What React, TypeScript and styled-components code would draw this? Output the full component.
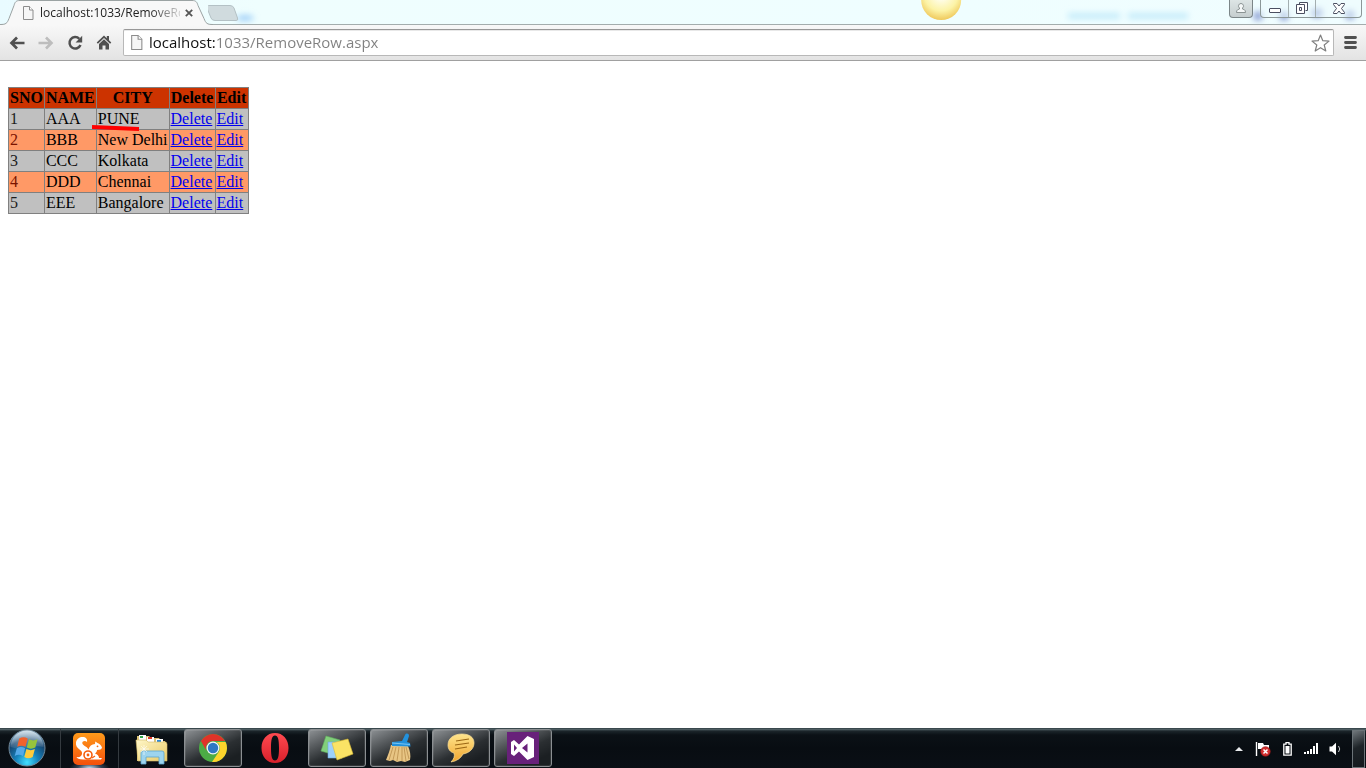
import React from "react";
import styled, { createGlobalStyle, css } from "styled-components";

const GlobalStyle = createGlobalStyle`
  * { box-sizing: border-box; }
  body { margin: 0; background: #fff; }
  button { padding: 0; border: 0; background: none; font: inherit; }
  svg { display: block; flex: none; }
`;

const uiFont = `"Open Sans", "Noto Sans", sans-serif`;

const Screen = styled.div`
  display: flex;
  flex-direction: column;
  min-height: 100vh;
`;

const TitleBar = styled.header`
  position: relative;
  display: flex;
  height: 25px;
  padding: 0 4px;
  background: linear-gradient(90deg, #e9fbff 0, #effefe 260px, #effeff 70%, #f0fdff);
  border-bottom: 1px solid #a3adad;
`;

const Glow = styled.svg`
  position: absolute;
  left: 0;
  top: 0;
  width: 100%;
  height: 24px;
`;

const Tab = styled.div`
  position: relative;
  z-index: 1;
  display: flex;
  align-items: center;
  width: 204px;
  height: 25px;
  padding: 1px 15px 0 18px;
  font-family: ${uiFont};
  font-size: 12px;
  color: #222;
`;

const TabShape = styled.svg`
  position: absolute;
  left: -4px;
  top: 0;
`;

const TabTitle = styled.span`
  position: relative;
  flex: 1;
  min-width: 0;
  margin: 0 4px 0 6px;
  white-space: nowrap;
  line-height: 20px;
  mask-image: linear-gradient(90deg, #000 110px, #0003 138px);
`;

const IconButton = styled.button<{ $w?: number }>`
  position: relative;
  display: flex;
  align-items: center;
  justify-content: center;
  width: ${(p) => p.$w ?? 29}px;
  height: 100%;
`;

const NewTab = styled.button`
  position: relative;
  width: 34px;
  height: 22px;
`;

const WindowControls = styled.div`
  position: relative;
  display: flex;
  align-items: flex-start;
  gap: 7px;
  margin-left: auto;
`;

const UserButton = styled.button`
  display: flex;
  align-items: center;
  justify-content: center;
  width: 24px;
  height: 18px;
  border: 1px solid #7c8688;
  border-top: 0;
  border-radius: 0 0 4px 4px;
  background: linear-gradient(#dde5e5, #c6cecf);
`;

const ControlGroup = styled.div`
  display: flex;
  height: 18px;
  border: 1px solid #8b9798;
  border-top: 0;
  border-radius: 0 0 4px 4px;
  background: #eefbfd80;
`;

const Control = styled.button<{ $wide?: boolean }>`
  display: flex;
  align-items: center;
  justify-content: center;
  width: ${(p) => (p.$wide ? 46 : 27)}px;
  height: 16px;
  & + & { height: 17px; padding-bottom: 1px; border-left: 1px solid #a3aeb0; }
`;

const Toolbar = styled.nav`
  display: flex;
  align-items: center;
  height: 36px;
  padding: 0 1px 0 2px;
  background: linear-gradient(#f8f8f8, #e3e3e3);
  border-bottom: 1px solid #a0a0a0;
`;

const Omnibox = styled.form`
  display: flex;
  align-items: center;
  flex: 1;
  height: 27px;
  margin: 0 2px 0 5px;
  padding-left: 6px;
  border: 1px solid #b8b8b8;
  border-top-color: #989898;
  border-radius: 2px;
  background: #fff;
  box-shadow: inset 0 1px #e8e8e8;
`;

const Address = styled.input`
  flex: 1;
  min-width: 0;
  height: 24px;
  margin-left: 6px;
  padding: 0 0 2px;
  border: 0;
  outline: 0;
  font-family: ${uiFont};
  font-size: 15px;
  color: #808080;
  background: linear-gradient(90deg, #111 67px, #808080 67px);
  background-clip: text;
  -webkit-text-fill-color: transparent;
`;

const Page = styled.main`
  flex: 1;
  padding: 26px 8px 8px;
  font-family: "Liberation Serif", serif;
  font-size: 16px;
  line-height: 18px;
  color: #000;
`;

const Grid = styled.table`
  border-collapse: collapse;
  th, td {
    position: relative;
    padding: 1px;
    border: 1px solid #808080;
    white-space: nowrap;
  }
  td { text-align: left; }
`;

const ActionColumn = styled.col<{ $w: number }>`
  width: ${(p) => p.$w}px;
`;

const HeadRow = styled.tr`
  background: #cc3300;
`;

const Row = styled.tr<{ $alt: boolean }>`
  background: ${(p) => (p.$alt ? "#ff9966" : "#c0c0c0")};
`;

const Serial = styled.td<{ $alt: boolean }>`
  color: ${(p) => (p.$alt ? "#7a1400" : "#1c1c1c")};
`;

const Link = styled.a`
  color: #0000ee;
  text-decoration: underline;
`;

const Underline = styled.svg`
  position: absolute;
  left: -5px;
  top: 14px;
`;

const TaskBar = styled.footer`
  display: flex;
  align-items: stretch;
  height: 40px;
  padding-right: 1px;
  border-top: 1px solid #39484d;
  background: linear-gradient(#5c6d72 0, #1c262b 2px, #0b1116 6px, #080d12 50%, #0a0f15);
`;

const TaskButton = styled.button<{ $w?: number; $framed?: boolean }>`
  display: flex;
  align-items: center;
  justify-content: center;
  width: ${(p) => p.$w ?? 58}px;
  height: 38px;
  margin-right: ${(p) => (p.$w ? 0 : 4)}px;
  ${(p) =>
    p.$framed &&
    css`
      border: 1px solid #8b8f92;
      border-radius: 3px;
      background: linear-gradient(155deg, #8d9194 0, #5a5e61 28%, #2b2f32 55%, #1b1f22 80%);
      box-shadow: inset 0 0 0 1px #ffffff18;
    `}
`;

const StartButton = styled(TaskButton)`
  padding-right: 6px;
`;

const Launcher = styled(TaskButton)`
  height: 39px;
  border-left: 1px solid #343a3f;
`;

const ActiveLauncher = styled(Launcher)`
  padding-right: 2px;
  background: radial-gradient(ellipse 20px 7px at 50% 100%, #c3dcf4, #53718f80 60%, transparent);
`;

const Tray = styled.div`
  display: flex;
  align-items: center;
  margin-left: auto;
`;

const TrayButton = styled.button`
  display: flex;
  align-items: center;
  justify-content: center;
  width: 24px;
  height: 38px;
`;

const ShowDesktop = styled.button`
  width: 13px;
  height: 38px;
  margin-left: 5px;
  border: 1px solid #6c7478;
  background: linear-gradient(155deg, #70777b, #1e2428 45%, #14191d);
`;

const PageGlyph = styled.svg`
  position: relative;
`;

const PageIcon = ({ h = 14 }: { h?: number }) => (
  <PageGlyph width={h - 2} height={h} viewBox="0 0 12 14" aria-hidden="true">
    <path d="M1.500.5h6l3.500 3.500v9.500h-9.500z" fill="#f6f6f6" stroke="#8c8c8c" />
    <path d="M7.500.5v3.500h3.500" fill="#fff" stroke="#8c8c8c" />
  </PageGlyph>
);

const BackIcon = () => (
  <svg width="16" height="14" viewBox="0 0 16 14" aria-hidden="true">
    <path d="M8 1.500 2.500 7 8 12.500M3 7h12.500" fill="none" stroke="#505050" strokeWidth="2.700" />
  </svg>
);

const ForwardIcon = () => (
  <svg width="16" height="14" viewBox="0 0 16 14" aria-hidden="true">
    <path d="M8 1.500 13.500 7 8 12.500M13 7H.5" fill="none" stroke="#bdbdbd" strokeWidth="2.600" />
  </svg>
);

const ReloadIcon = () => (
  <svg width="16" height="16" viewBox="0 0 16 16" aria-hidden="true">
    <path d="M12.300 3.800A5.700 5.700 0 1 0 13.500 10" fill="none" stroke="#505050" strokeWidth="2.500" />
    <path d="M15.200.8v6.600H8.600z" fill="#505050" />
  </svg>
);

const HomeIcon = () => (
  <svg width="16" height="15" viewBox="0 0 16 15" aria-hidden="true">
    <path d="M8 .5.7 7.500l1.200 1.200L8 3l6.100 5.700 1.200-1.200-2.300-2.200V1h-2.200v2.200z" fill="#505050" />
    <path d="M3 9 8 4.300 13 9v5.500H9.500v-4h-3v4H3z" fill="#505050" />
  </svg>
);

const StartIcon = () => (
  <svg width="40" height="38" viewBox="0 0 40 38" aria-hidden="true">
    <defs>
      <radialGradient id="orb" cx=".5" cy=".9" r=".9">
        <stop offset="0" stopColor="#44e0ff" />
        <stop offset=".35" stopColor="#1583bd" />
        <stop offset=".7" stopColor="#16456f" />
        <stop offset="1" stopColor="#7cabc9" />
      </radialGradient>
      <linearGradient id="shine" x2="0" y2="1">
        <stop stopColor="#fff" stopOpacity=".7" />
        <stop offset="1" stopColor="#fff" stopOpacity=".08" />
      </linearGradient>
    </defs>
    <circle cx="20" cy="19" r="18" fill="url(#orb)" stroke="#738998" />
    <path d="M3.500 18a16.500 16.500 0 0 1 33 0c-10-3-22 4-33 0z" fill="url(#shine)" />
    <path d="M12.200 9.500c3.200-2 6-1.500 8.500 0l-2.200 8.300c-3-1.500-5.500-1.500-8.300 0z" fill="#f0622c" />
    <path d="M22 10.300c3 1.500 5.500 1.500 8.500 0l-2.200 8.200c-3 1.500-5.800 1.500-8.500 0z" fill="#96c43c" />
    <path d="M9.800 19.200c3-1.700 5.500-1.500 8.300 0L16 27c-3-1.700-5.500-1.700-8.300 0z" fill="#54a9e8" />
    <path d="M19.400 20c3 1.500 5.700 1.500 8.500 0l-2.200 8c-3 1.700-5.700 1.700-8.400 0z" fill="#fdcb3c" />
  </svg>
);

const SquirrelIcon = () => (
  <svg width="32" height="32" viewBox="0 0 32 32" aria-hidden="true">
    <defs>
      <linearGradient id="uc" x2="0" y2="1">
        <stop stopColor="#ff9a1a" />
        <stop offset="1" stopColor="#f4500c" />
      </linearGradient>
    </defs>
    <rect width="32" height="32" rx="5" fill="url(#uc)" />
    <path
      d="M10 26.500c-4 0-6-1-6.500-2.500 3 .5 5-.5 5.500-3 .4-2-.6-3-2.500-4.500C4 14.500 2.500 12.500 3 9.500 3.500 6 6.500 4 9.500 4c3.500 0 5 2 4.500 5-1.500-1.700-5-1-4.700 1.200.3 2.300 5 3.300 6.200 6.300 1-3.500 3-5.300 6.500-5.500l.3-2.500L24.500 10c2.300.8 3.700 2.500 4.500 4.500-.5 1.800-2 2.500-5 2.500 0 1.500-.8 2.700-2 3.500 2.500.5 4 2.500 4 4.500h3l-1 1.500z"
      fill="#fff"
    />
    <circle cx="15" cy="22" r="4" fill="#fff" stroke="#f65d0c" strokeWidth="1.600" />
    <circle cx="15" cy="22" r="1.400" fill="#f65d0c" />
    <path d="m19 25 3-2" stroke="#f65d0c" strokeWidth="1.200" />
    <circle cx="24.500" cy="13.300" r=".9" fill="#f86a10" />
  </svg>
);

const FolderIcon = () => (
  <svg width="34" height="32" viewBox="0 0 34 32" aria-hidden="true">
    <defs>
      <linearGradient id="folder" x2="1" y2="1">
        <stop stopColor="#fff7c9" />
        <stop offset="1" stopColor="#e8c966" />
      </linearGradient>
    </defs>
    <path d="M2 3h12l2 2h8l2 3h4v20H2z" fill="#dcc477" />
    <path d="M4 2h7v6H4zM12 4h7v5h-7zM21 6h7v4h-7z" fill="#fff" />
    <path d="M5 3h3v2H5z" fill="#32a84c" />
    <path d="M13 4h4v2h-4z" fill="#e23b2d" />
    <path d="M22 7h4v2h-4z" fill="#2c89d8" />
    <path d="M1 7h10l2 2h18l1 2v17H3z" fill="url(#folder)" stroke="#d5bb68" strokeWidth=".6" />
    <path d="M6 31V20q0-2 2-2h19q2 0 2 2v11h-5v-7H11v7z" fill="#9dd4ee" stroke="#5aa5cd" strokeWidth=".8" />
    <path d="M9 12v10M5 16h9M6 13l6 6M12 13l-6 6" stroke="#fff" strokeWidth=".6" />
  </svg>
);

const ChromeIcon = () => (
  <svg width="28" height="28" viewBox="0 0 28 28" aria-hidden="true">
    <circle cx="14" cy="14" r="14" fill="#4cab45" />
    <path d="M1.900 7A14 14 0 0 1 26.100 7H14a7 7 0 0 0-6.100 10.500z" fill="#df3329" />
    <path d="M26.600 8A14 14 0 0 1 13 28l7-10.500A7 7 0 0 0 17.500 8z" fill="#fdd42c" />
    <circle cx="14" cy="14" r="6.500" fill="#f3f5f5" />
    <circle cx="14" cy="14" r="5.200" fill="#2f78c4" />
  </svg>
);

const OperaIcon = () => (
  <svg width="28" height="30" viewBox="0 0 28 30" aria-hidden="true">
    <defs>
      <linearGradient id="opera" x2="0" y2="1">
        <stop stopColor="#ff4a50" />
        <stop offset="1" stopColor="#d8202b" />
      </linearGradient>
    </defs>
    <path
      fillRule="evenodd"
      d="M14 0c8 0 13.500 6.300 13.500 15S22 30 14 30 .5 23.700.5 15 6 0 14 0zm0 2.500c-3 0-4 4-4 12.500s1 12.500 4 12.500 4-4 4-12.500-1-12.500-4-12.500z"
      fill="url(#opera)"
    />
  </svg>
);

const NotesIcon = () => (
  <svg width="34" height="28" viewBox="0 0 34 28" aria-hidden="true">
    <path d="m6 2 14 4-5 15-14-4z" fill="#82cf7c" stroke="#5fb05b" strokeWidth=".6" />
    <path d="M8 8h14v16H8z" fill="#9dd0fb" stroke="#69a8dc" strokeWidth=".6" />
    <path d="m12 9 16-4 5 15-16 6z" fill="#fbe365" stroke="#d9bb35" strokeWidth=".6" />
  </svg>
);

const BroomIcon = () => (
  <svg width="30" height="30" viewBox="0 0 30 30" aria-hidden="true">
    <path d="M7 12C6 17 4 22 2 27l4 1 3-1 4 2 4-1 4 1 5-2c1-5 0-9-2-14z" fill="#e8c584" />
    <path
      d="m9 14-4 13m7-13-3 13m6-13-2 14m5-14v14m2-14 2 14m0-14 3 12"
      stroke="#b98e4c"
      strokeWidth=".8"
      fill="none"
    />
    <path d="m8 9 10-1 3-6c1-2 4-2 4 1l-2 6 3 1 .5 3.500L8 13z" fill="#2291dc" />
    <path d="m8 10 18 1.500" stroke="#79c5f3" />
  </svg>
);

const ChatIcon = () => (
  <svg width="28" height="30" viewBox="0 0 28 30" aria-hidden="true">
    <defs>
      <linearGradient id="chat" x2="0" y2="1">
        <stop stopColor="#ffe58c" />
        <stop offset="1" stopColor="#f0a52f" />
      </linearGradient>
    </defs>
    <path
      d="M15 1c7 0 12 3 12 9s-5 10-11 11c-2 4-6 7-12 8 3-3 4-6 3-9-4-1-6-4-6-8C1 5 7 1 15 1z"
      fill="url(#chat)"
      stroke="#fae09a"
      strokeWidth=".7"
    />
    <path d="m9 8 13-2M8 12l14-2M8 16l12-2" stroke="#9b6714" strokeWidth="1.200" />
  </svg>
);

const VisualStudioIcon = () => (
  <svg width="32" height="32" viewBox="0 0 32 32" aria-hidden="true">
    <rect width="32" height="32" fill="#68217a" />
    <path
      fillRule="evenodd"
      d="M20.500 4 27 7v18l-6.500 3-8.500-8.500L7 24l-3-2V10l3-2 5 4.500zM7 12.500v7l3-3.500zm13.500-1L15 16l5.500 4.500z"
      fill="#fff"
    />
  </svg>
);

const rows = [
  ["AAA", "PUNE"],
  ["BBB", "New Delhi"],
  ["CCC", "Kolkata"],
  ["DDD", "Chennai"],
  ["EEE", "Bangalore"],
];

const runningApps = [
  { name: "Sticky Notes", Icon: NotesIcon },
  { name: "Cleaner", Icon: BroomIcon },
  { name: "Messenger", Icon: ChatIcon },
  { name: "Visual Studio", Icon: VisualStudioIcon },
];

function BrowserTitleBar() {
  return (
    <TitleBar>
      <Glow aria-hidden="true">
        <defs>
          <radialGradient id="sun" cx=".5" cy=".35" r=".65">
            <stop offset=".2" stopColor="#fffde9" />
            <stop offset=".65" stopColor="#fcf3a6" />
            <stop offset="1" stopColor="#efc95c" />
          </radialGradient>
          <filter id="soft" filterUnits="userSpaceOnUse" x="-400" y="-10" width="900" height="50">
            <feGaussianBlur stdDeviation="3" />
          </filter>
        </defs>
        <ellipse cx="245" cy="18" rx="9" ry="3" fill="#9ccdf8" filter="url(#soft)" />
        <svg x="68.900%" overflow="visible">
          <circle cx="0" cy="0" r="20" fill="url(#sun)" />
        </svg>
        <svg x="100%" overflow="visible">
          <g filter="url(#soft)">
            <path d="M-298 16h52m8 0h60" stroke="#c4ebfa" strokeWidth="6" />
            <path d="M-112 16h8m18 0h8m24-3h10m24 2h8" stroke="#8194cf" strokeWidth="8" />
          </g>
        </svg>
      </Glow>
      <Tab>
        <TabShape width="214" height="25" viewBox="0 0 214 25" aria-hidden="true">
          <path
            d="M0 25v-.5c6 0 7-1 9-6l5-13C15 2 16 .5 20 .5h172c4 0 5 1.500 6 5l6 13c2 5 3 6 9 6v.5z"
            fill="#f8f8f8"
          />
          <path
            d="M0 24.500c6 0 7-1 9-6l5-13C15 2 16 .5 20 .5h172c4 0 5 1.500 6 5l6 13c2 5 3 6 9 6"
            fill="none"
            stroke="#9ba3a3"
          />
        </TabShape>
        <PageIcon />
        <TabTitle>localhost:1033/RemoveRo</TabTitle>
        <IconButton $w={9} aria-label="Close tab">
          <svg width="8" height="8" viewBox="0 0 8 8" aria-hidden="true">
            <path d="m.8.8 6.400 6.400m0-6.400L.8 7.200" stroke="#555" strokeWidth="1.800" />
          </svg>
        </IconButton>
      </Tab>
      <NewTab aria-label="New tab">
        <svg width="34" height="22" viewBox="0 0 34 22" aria-hidden="true">
          <path
            d="M.5 5.500H22q3 0 4 2.500l3.500 10q1 2.500-1.500 2.500H7q-3 0-4-2.500L-1 8q-1-2.500 1.500-2.500z"
            fill="#d0dbde"
            stroke="#b4c1c5"
          />
        </svg>
      </NewTab>
      <WindowControls>
        <UserButton aria-label="User">
          <svg width="10" height="11" viewBox="0 0 10 11" aria-hidden="true">
            <path
              d="M5 .5a2.500 2.500 0 0 1 1.500 4.500v1l2 .8q1 .7 1 2.700h-9q0-2 1-2.700l2-.8V5A2.500 2.500 0 0 1 5 .5z"
              fill="#f5f8f8"
              stroke="#8b9393"
            />
          </svg>
        </UserButton>
        <ControlGroup>
          <Control aria-label="Minimize">
            <svg width="12" height="12" viewBox="0 0 12 12" aria-hidden="true">
              <rect x=".5" y="6.500" width="11" height="4" rx=".5" fill="#fff" stroke="#4b4f61" />
            </svg>
          </Control>
          <Control aria-label="Restore">
            <svg width="12" height="12" viewBox="0 0 12 12" aria-hidden="true">
              <path d="M3.500 2.500v-2h8v8h-2" fill="#fff" stroke="#4b4f61" />
              <path d="M.5 2.500h8v9h-8zM3.500 5.500h2v3h-2z" fill="#fff" stroke="#4b4f61" />
            </svg>
          </Control>
          <Control $wide aria-label="Close">
            <svg width="12" height="11" viewBox="0 0 12 11" aria-hidden="true">
              <path
                d="M.5.5h3.500l2 2.500 2-2.500h3.500v1L8.500 5.500l3 4v1H8L6 8l-2 2.500H.5v-1l3-4-3-4z"
                fill="#fff"
                stroke="#4b4f61"
              />
            </svg>
          </Control>
        </ControlGroup>
      </WindowControls>
    </TitleBar>
  );
}

function BrowserToolbar() {
  return (
    <Toolbar>
      <IconButton aria-label="Back"><BackIcon /></IconButton>
      <IconButton aria-label="Forward"><ForwardIcon /></IconButton>
      <IconButton aria-label="Reload"><ReloadIcon /></IconButton>
      <IconButton aria-label="Home"><HomeIcon /></IconButton>
      <Omnibox>
        <PageIcon h={15} />
        <Address aria-label="Address" defaultValue="localhost:1033/RemoveRow.aspx" />
        <IconButton $w={26} type="button" aria-label="Bookmark this page">
          <svg width="19" height="18" viewBox="0 0 19 18" aria-hidden="true">
            <path
              d="m9.500 1 2.300 5.700 6.200.4-4.800 3.900 1.600 6-5.300-3.300L4.200 17l1.600-6L1 7.100l6.200-.4z"
              fill="#fff"
              stroke="#808080"
              strokeWidth="1.200"
              strokeLinejoin="round"
            />
          </svg>
        </IconButton>
      </Omnibox>
      <IconButton aria-label="Menu">
        <svg width="13" height="13" viewBox="0 0 13 13" aria-hidden="true">
          <path d="M1.500 1.500h10m-10 5h10m-10 5h10" stroke="#505050" strokeWidth="2.800" strokeLinecap="round" />
        </svg>
      </IconButton>
    </Toolbar>
  );
}

export default function App() {
  return (
    <Screen>
      <GlobalStyle />
      <BrowserTitleBar />
      <BrowserToolbar />
      <Page>
        <Grid>
          <colgroup>
            <col />
            <col />
            <col />
            <ActionColumn $w={46} />
            <ActionColumn $w={33} />
          </colgroup>
          <thead>
            <HeadRow>
              {["SNO", "NAME", "CITY", "Delete", "Edit"].map((h) => (
                <th key={h} scope="col">{h}</th>
              ))}
            </HeadRow>
          </thead>
          <tbody>
            {rows.map(([name, city], i) => (
              <Row key={name} $alt={i % 2 === 1}>
                <Serial $alt={i % 2 === 1}>{i + 1}</Serial>
                <td>{name}</td>
                <td>
                  {city}
                  {i === 0 && (
                    <Underline width="48" height="8" viewBox="0 0 48 8" aria-hidden="true">
                      <path d="m0 4 47 2" stroke="#ff0000" strokeWidth="4" />
                    </Underline>
                  )}
                </td>
                <td><Link href="#delete">Delete</Link></td>
                <td><Link href="#edit">Edit</Link></td>
              </Row>
            ))}
          </tbody>
        </Grid>
      </Page>
      <TaskBar>
        <StartButton $w={60} aria-label="Start"><StartIcon /></StartButton>
        <ActiveLauncher $w={58} aria-label="UC Browser"><SquirrelIcon /></ActiveLauncher>
        <Launcher $w={66} aria-label="Explorer"><FolderIcon /></Launcher>
        <TaskButton $framed aria-label="Chrome"><ChromeIcon /></TaskButton>
        <TaskButton aria-label="Opera"><OperaIcon /></TaskButton>
        {runningApps.map(({ name, Icon }) => (
          <TaskButton key={name} $framed aria-label={name}><Icon /></TaskButton>
        ))}
        <Tray>
          <TrayButton aria-label="Show hidden icons">
            <svg width="8" height="4" viewBox="0 0 8 4" aria-hidden="true"><path d="m0 4 4-4 4 4z" fill="#e8eaec" /></svg>
          </TrayButton>
          <TrayButton aria-label="Action Center">
            <svg width="16" height="16" viewBox="0 0 16 16" aria-hidden="true">
              <path d="M1.500 1v14" stroke="#fff" strokeWidth="1.400" />
              <path d="M3 2h5l1 2h5v6H9L8 8H3z" fill="#fff" />
              <circle cx="10.500" cy="10.500" r="4.800" fill="#d22f2f" stroke="#8d1717" strokeWidth=".6" />
              <path d="m8.500 8.500 4 4m0-4-4 4" stroke="#fff" strokeWidth="1.500" />
            </svg>
          </TrayButton>
          <TrayButton aria-label="Battery">
            <svg width="9" height="14" viewBox="0 0 9 14" aria-hidden="true">
              <path d="M3 .7h3v1.500h2.200v11H.8v-11H3z" fill="none" stroke="#fff" strokeWidth="1.300" />
              <path d="M2.500 4h4v7.500h-4z" fill="#fff" />
            </svg>
          </TrayButton>
          <TrayButton aria-label="Network">
            <svg width="15" height="12" viewBox="0 0 15 12" aria-hidden="true">
              <path d="M0 9h2v2H0zM3 8h2v3H3zM6 6h2v5H6zM9 3h2v8H9zM12 0h2v11h-2z" fill="#fff" />
            </svg>
          </TrayButton>
          <TrayButton aria-label="Volume">
            <svg width="13" height="14" viewBox="0 0 13 14" aria-hidden="true">
              <path d="M.5 4.500h2.500L7 .8v12.400L3 9.500H.5z" fill="#fff" />
              <path d="M9.500 4q2.500 3 0 6" fill="none" stroke="#c8cbce" />
            </svg>
          </TrayButton>
          <ShowDesktop aria-label="Show desktop" />
        </Tray>
      </TaskBar>
    </Screen>
  );
}
